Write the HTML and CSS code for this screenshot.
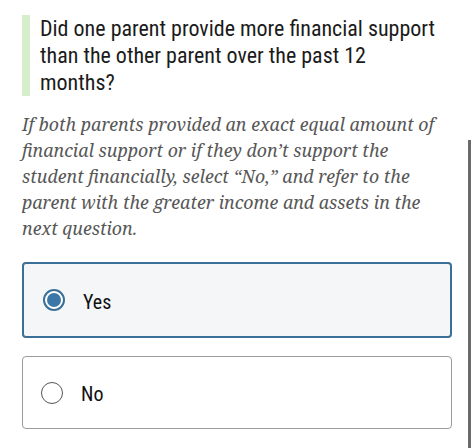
FILE: index.html
```html
<!DOCTYPE html>
<html>
<head>
<meta charset="utf-8">
<link rel="stylesheet" href="styles.css">
</head>
<body>
<div class="page">
  <div class="content">
    <h1 class="question">Did one parent provide more financial support than the other parent over the past 12 months?</h1>
    <p class="hint">If both parents provided an exact equal amount of financial support or if they don’t support the student financially, select “No,” and refer to the parent with the greater income and assets in the next question.</p>
    <div class="options">
      <label class="option selected">
        <span class="radio"><span class="dot"></span></span>
        <span class="label">Yes</span>
      </label>
      <label class="option">
        <span class="radio"></span>
        <span class="label">No</span>
      </label>
    </div>
  </div>
  <div class="scrollbar"></div>
</div>
</body>
</html>
```
FILE: styles.css
```css
html, body {
  margin: 0;
  padding: 0;
  background: #ffffff;
}
.page {
  width: 474px;
  height: 448px;
  display: flex;
  overflow: hidden;
}
.content {
  width: 430px;
  padding: 15px 0 0 22px;
  flex: none;
}
.question {
  margin: 0;
  border-left: 8px solid #d6efca;
  padding-left: 10px;
  padding-right: 12px;
  font-family: "Roboto Condensed", "Liberation Sans", sans-serif;
  font-weight: 400;
  font-size: 22px;
  line-height: 27px;
  color: #1b1b1b;
}
.hint {
  margin: 15px 0 0 0;
  font-family: "Noto Serif", "DejaVu Serif Condensed", serif;
  font-style: italic;
  font-size: 17.8px;
  line-height: 26px;
  color: #575757;
}
.options {
  margin-top: 21px;
  display: flex;
  flex-direction: column;
  gap: 18px;
}
.option {
  display: flex;
  align-items: center;
  height: 73px;
  box-sizing: border-box;
  border: 1px solid #9a9a9a;
  border-radius: 4px;
  padding-left: 18px;
  background: #ffffff;
}
.option.selected {
  height: 76px;
  border: 2px solid #3a6f97;
  background: #f4f6f8;
  padding-left: 19px;
}
.radio {
  width: 22px;
  height: 22px;
  box-sizing: border-box;
  border-radius: 50%;
  border: 1.5px solid #555;
  background: #fff;
  display: flex;
  align-items: center;
  justify-content: center;
  flex: none;
}
.selected .radio {
  border: 2px solid #3a6f97;
}
.dot {
  width: 14px;
  height: 14px;
  border-radius: 50%;
  background: #3b78a8;
}
.label {
  margin-left: 18px;
  padding-top: 3px;
  font-family: "Roboto Condensed", "Liberation Sans", sans-serif;
  font-size: 20px;
  color: #111;
}
.scrollbar {
  width: 3px;
  height: 308px;
  margin-top: 140px;
  margin-left: 16px;
  background: #6a6a6a;
  flex: none;
}
```
